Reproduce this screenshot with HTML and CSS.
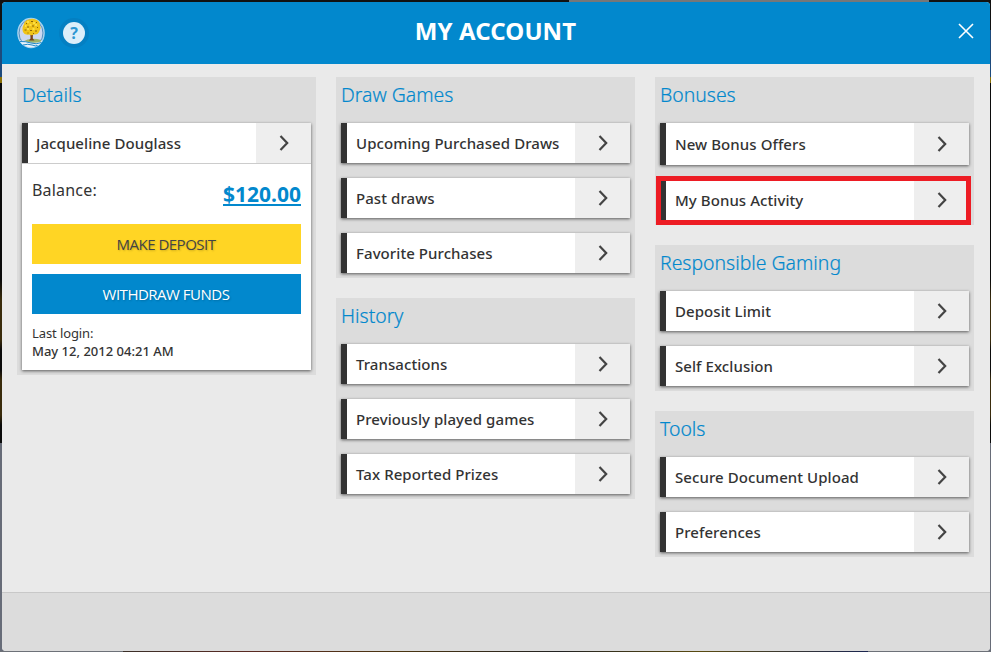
FILE: index.html
```
<!DOCTYPE html>
<html lang="en">
<head>
    <meta charset="UTF-8">
    <meta name="viewport" content="width=device-width, initial-scale=1.0">
    <title>My Account</title>
    <link rel="stylesheet" href="styles.css">
</head>
<body>
    <svg width="0" height="0" class="sprite">
        <symbol id="chevron" viewBox="0 0 10 16">
            <path d="M1.5 1 L8.2 8 L1.5 15" fill="none" stroke="#444" stroke-width="2.2"/>
        </symbol>
    </svg>

    <div class="modal">
        <!-- Header -->
        <header class="modal-header">
            <div class="header-left">
                <svg class="logo" width="28" height="32" viewBox="0 0 28 32">
                    <ellipse cx="14" cy="16" rx="13.2" ry="14.6" fill="#cbd8f0" stroke="#a5d3ee" stroke-width="1.2"/>
                    <ellipse cx="14" cy="16" rx="12" ry="13.4" fill="#cdd8f1" stroke="#1d6fa8" stroke-width="0.7"/>
                    <path d="M5 25 Q14 19.5 24 23 L23.5 26 L12 25.5 Z" fill="#9db36a"/>
                    <path d="M13.3 16 L16 16 L15.8 21.5 L17.5 23.5 L12 23.5 L13.5 21.5 Z" fill="#7a4218"/>
                    <path d="M7 7 Q7.5 3 12 2.5 Q15.5 1 19 2.8 Q23 4 23 8 Q24.5 11 22.5 14 Q21 18 17 17.5 Q14.5 19 12 17.5 Q7.5 18.5 6 15 Q4.5 11 7 7 Z" fill="#f0c419"/>
                    <path d="M9 6.5h1M14 4.5h2M19 5.5h1M10 10h2M15 9h2M20 10.5h1M7.5 13h2M13 13.5h2M18 14h2M10.5 16h1M16 16.5h1" stroke="#8a6508" stroke-width="1.2"/>
                    <path d="M10 5h2M16 6h2M8 9h1.5M12.5 8h2M18 8h2M10 12h2M15.5 12h2" stroke="#ffe650" stroke-width="1.4"/>
                    <path d="M2 23.5 Q8 24 13 25.5 T25.5 24 Q22 30 14 30.3 Q6 30 2 23.5 Z" fill="#e9f4fb"/>
                    <path d="M2.5 24.5 Q9 24.2 14 26 T24.5 25.5 M6 28 Q11 26.5 15 28 T20.5 28.5" fill="none" stroke="#1d87c8" stroke-width="1"/>
                </svg>
                <span class="help">?</span>
            </div>
            <h1>MY ACCOUNT</h1>
            <svg class="close" width="16" height="16" viewBox="0 0 16 16">
                <path d="M1 1 L15 15 M15 1 L1 15" stroke="#fff" stroke-width="1.6"/>
            </svg>
        </header>

        <main class="columns">
            <div class="column">
                <!-- Details -->
                <section class="panel">
                    <h2>Details</h2>
                    <div class="card">
                        <a class="item item-flat"><span>Jacqueline Douglass</span><i><svg><use href="#chevron"/></svg></i></a>
                        <div class="card-body">
                            <div class="balance">
                                <span>Balance:</span>
                                <a class="amount">$120.00</a>
                            </div>
                            <button class="btn btn-yellow">MAKE DEPOSIT</button>
                            <button class="btn btn-blue">WITHDRAW FUNDS</button>
                            <p class="login">Last login:<br><b>May 12, 2012 04:21 AM</b></p>
                        </div>
                    </div>
                </section>
            </div>

            <div class="column">
                <!-- Draw Games -->
                <section class="panel">
                    <h2>Draw Games</h2>
                    <div class="list">
                        <a class="item"><span>Upcoming Purchased Draws</span><i><svg><use href="#chevron"/></svg></i></a>
                        <a class="item"><span>Past draws</span><i><svg><use href="#chevron"/></svg></i></a>
                        <a class="item"><span>Favorite Purchases</span><i><svg><use href="#chevron"/></svg></i></a>
                    </div>
                </section>
                <!-- History -->
                <section class="panel">
                    <h2>History</h2>
                    <div class="list">
                        <a class="item"><span>Transactions</span><i><svg><use href="#chevron"/></svg></i></a>
                        <a class="item"><span>Previously played games</span><i><svg><use href="#chevron"/></svg></i></a>
                        <a class="item"><span>Tax Reported Prizes</span><i><svg><use href="#chevron"/></svg></i></a>
                    </div>
                </section>
            </div>

            <div class="column">
                <!-- Bonuses -->
                <section class="panel">
                    <h2>Bonuses</h2>
                    <div class="list">
                        <a class="item item-tall"><span>New Bonus Offers</span><i><svg><use href="#chevron"/></svg></i></a>
                        <a class="item item-marked"><span>My Bonus Activity</span><i><svg><use href="#chevron"/></svg></i></a>
                    </div>
                </section>
                <!-- Responsible Gaming -->
                <section class="panel">
                    <h2>Responsible Gaming</h2>
                    <div class="list">
                        <a class="item"><span>Deposit Limit</span><i><svg><use href="#chevron"/></svg></i></a>
                        <a class="item"><span>Self Exclusion</span><i><svg><use href="#chevron"/></svg></i></a>
                    </div>
                </section>
                <!-- Tools -->
                <section class="panel">
                    <h2>Tools</h2>
                    <div class="list">
                        <a class="item"><span>Secure Document Upload</span><i><svg><use href="#chevron"/></svg></i></a>
                        <a class="item"><span>Preferences</span><i><svg><use href="#chevron"/></svg></i></a>
                    </div>
                </section>
            </div>
        </main>

        <footer class="modal-footer"></footer>
    </div>
</body>
</html>
```
FILE: styles.css
```
* {
    box-sizing: border-box;
}
body {
    margin: 0;
    height: 652px;
    padding: 2px 1px 1px 2px;
    overflow: hidden;
    font-family: "Noto Sans", "Open Sans", sans-serif;
    color: #333;
    /* dimmed page behind the dialog */
    background:
        linear-gradient(90deg, transparent 569px, #777 569px, #777 929px, transparent 929px) 0 0 / 100% 2px no-repeat,
        linear-gradient(90deg, #6d7178 0, #6d7178 123px, #3a2f28 123px, #5a2a22 250px, #4a3410 400px, #222 560px, #5a4a10 700px, #1a2550 868px, #6d7178 868px) 0 100% / 100% 1px no-repeat,
        linear-gradient(#111 0, #111 30px, #1d4a7c 30px, #1d4a7c 77px, #8a7008 77px, #8a7008 83px, #0b0b0b 83px, #0b0b0b 280px, #3a2c0c 300px, #3a2c0c 340px, #0b0b0b 350px, #0b0b0b 370px, #3a2c0c 380px, #3a2c0c 415px, #0b0b0b 425px, #0b0b0b 443px, #676c78 443px);
}
.sprite {
    display: none;
}
.modal {
    height: 649px;
    display: flex;
    flex-direction: column;
    border-radius: 4px;
    overflow: hidden;
    background-color: #eaeaea;
}
.modal-header {
    height: 62px;
    flex: none;
    display: grid;
    grid-template-columns: 1fr auto 1fr;
    align-items: center;
    padding: 0 16px 0 15px;
    background-color: #0288cd;
}
.header-left {
    display: flex;
    align-items: center;
    gap: 18px;
}
.help {
    width: 22px;
    height: 22px;
    border-radius: 50%;
    background-color: #dceefa;
    box-shadow: 0 0 0 4px #047fc2;
    color: #2d97d3;
    font-size: 16px;
    font-weight: bold;
    line-height: 22px;
    text-align: center;
}
h1 {
    margin: 0;
    padding-bottom: 4px;
    color: #fff;
    font-size: 24px;
    font-weight: bold;
    line-height: 56px;
    letter-spacing: 0.1px;
}
.close {
    justify-self: end;
    margin-bottom: 4px;
}
.columns {
    flex: 1;
    display: grid;
    grid-template-columns: 299px 299px 319px;
    gap: 20px;
    align-items: start;
    padding: 13px 15px;
}
.column {
    display: flex;
    flex-direction: column;
    gap: 20px;
}
.panel {
    padding: 0 5px 5px;
    background-color: #dcdcdc;
}
h2 {
    margin: 0;
    height: 46px;
    color: #0288cd;
    font-size: 19.4px;
    font-weight: 300;
    line-height: 36px;
    -webkit-text-stroke: 0.2px #0288cd;
}
.list {
    display: flex;
    flex-direction: column;
    gap: 15px;
}
.item {
    height: 40px;
    display: flex;
    align-items: stretch;
    border-left: 6px solid #333;
    background-color: #fff;
    box-shadow: 0 1px 3px rgba(0, 0, 0, 0.6);
    font-size: 15px;
    font-weight: 500;
    letter-spacing: 0.07px;
}
.item span {
    flex: 1;
    display: flex;
    align-items: center;
    padding-left: 9px;
}
.item i {
    width: 55px;
    display: flex;
    align-items: center;
    justify-content: center;
    padding-left: 1px;
    background-color: #eee;
}
.item svg {
    width: 10px;
    height: 16px;
}
.item-tall {
    height: 42px;
}
.item-flat {
    box-shadow: none;
}
.item-flat span {
    padding-left: 8px;
}
.item-marked {
    position: relative;
    box-shadow: none;
}
.item-marked::after {
    content: "";
    position: absolute;
    inset: -4px -2px -5px -10px;
    border: 5px solid #ed1c24;
}
.card {
    background-color: #fff;
    box-shadow: 0 1px 3px rgba(0, 0, 0, 0.6);
}
.card-body {
    height: 207px;
    padding: 0 10px;
    border-top: 1px solid #ccc;
}
.balance {
    height: 60px;
    display: flex;
    justify-content: space-between;
    align-items: flex-start;
    font-size: 16px;
    line-height: 52px;
    letter-spacing: 0.2px;
}
.amount {
    color: #0288cd;
    font-size: 21px;
    font-weight: bold;
    line-height: 60px;
    letter-spacing: 0;
    text-decoration: underline;
}
.btn {
    display: block;
    width: 100%;
    height: 40px;
    margin: 0 0 10px;
    padding: 0 1px 1px 0;
    border: none;
    font-family: "Open Sans", sans-serif;
    font-size: 15px;
    letter-spacing: -0.5px;
    text-shadow: 1px 1px 2px rgba(0, 0, 0, 0.2);
}
.btn-yellow {
    background-color: #ffd524;
    color: #444;
}
.btn-blue {
    background-color: #0288cd;
    color: #fff;
}
.login {
    margin: 0;
    font-size: 13px;
    line-height: 18px;
    letter-spacing: -0.1px;
}
.login b {
    font-weight: 500;
    letter-spacing: 0;
}
.modal-footer {
    height: 59px;
    flex: none;
    border-top: 1px solid #c8c8c8;
    background-color: #dcdcdc;
}
```
